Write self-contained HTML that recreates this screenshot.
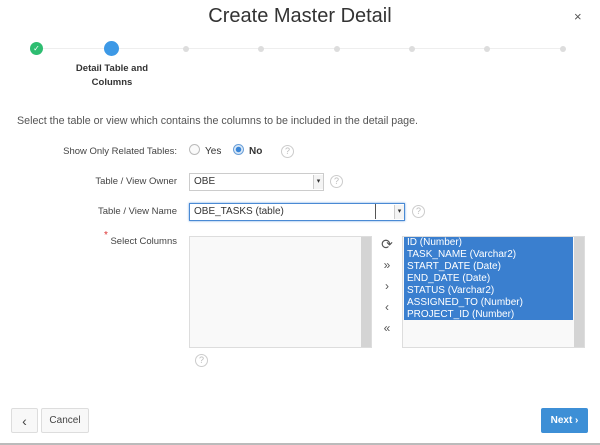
<!DOCTYPE html><html><head><style>
*{margin:0;padding:0;box-sizing:border-box}
body{width:600px;height:445px;background:#fff;font-family:"Liberation Sans",sans-serif;position:relative;overflow:hidden;color:#333}
.a{position:absolute}
.lbl{position:absolute;font-size:9.5px;color:#444;text-align:right;width:170px;left:7px}
.help{position:absolute;width:13px;height:13px;border:1px solid #ccc;border-radius:50%;font-size:9px;color:#bbb;text-align:center;line-height:11px}
.dot{position:absolute;width:6px;height:6px;border-radius:50%;background:#ddd;top:46px}
.btn{position:absolute;border:1px solid #ddd;background:#f8f8f8;border-radius:2px;font-size:10px;color:#444;text-align:center;line-height:24px}
.sel{position:absolute;border:1px solid #ccc;background:#fff;font-size:10px;line-height:16px;padding-left:4px}
.ar{position:absolute;font-size:12px;color:#555;left:381px;width:12px;text-align:center}
</style></head><body>
<div class="a" style="left:0;width:600px;top:5px;text-align:center;font-size:20px;color:#333">Create Master Detail</div>
<div class="a" style="left:574px;top:9px;font-size:13px;color:#555">×</div>
<div class="a" style="left:36px;top:48px;width:527px;height:1px;background:#eee"></div>
<div class="a" style="left:30px;top:42px;width:13px;height:13px;border-radius:50%;background:#2ebd71;color:#fff;font-size:8px;text-align:center;line-height:13px">✓</div>
<div class="a" style="left:104px;top:41px;width:15px;height:15px;border-radius:50%;background:#3d99e6"></div>
<div class="dot" style="left:183px"></div><div class="dot" style="left:258px"></div><div class="dot" style="left:334px"></div><div class="dot" style="left:409px"></div><div class="dot" style="left:484px"></div><div class="dot" style="left:560px"></div>
<div class="a" style="left:62px;width:100px;top:62px;text-align:center;font-size:9.5px;font-weight:bold;line-height:14px;color:#333">Detail Table and<br>Columns</div>
<div class="a" style="left:17px;top:115px;font-size:10.7px;color:#555">Select the table or view which contains the columns to be included in the detail page.</div>
<div class="lbl" style="top:146px">Show Only Related Tables:</div>
<div class="a" style="left:189px;top:144px;width:11px;height:11px;border:1px solid #bbb;border-radius:50%;background:#fafafa"></div>
<div class="a" style="left:205px;top:146px;font-size:10px">Yes</div>
<div class="a" style="left:233px;top:144px;width:11px;height:11px;border:1px solid #6a9fd8;border-radius:50%;background:radial-gradient(circle,#3a86d8 2.5px,#dbe9f7 3px)"></div>
<div class="a" style="left:249px;top:146px;font-size:10px;font-weight:bold">No</div>
<div class="help" style="left:281px;top:145px">?</div>
<div class="lbl" style="top:176px">Table / View Owner</div>
<div class="sel" style="left:189px;top:173px;width:135px;height:18px">OBE</div>
<div class="a" style="left:313px;top:175px;width:10px;height:14px;border-left:1px solid #ccc;font-size:7px;line-height:14px;text-align:center;background:#f4f4f4">▾</div>
<div class="help" style="left:330px;top:175px">?</div>
<div class="lbl" style="top:206px">Table / View Name</div>
<div class="sel" style="left:189px;top:203px;width:216px;height:18px;border-color:#4a8ad4;box-shadow:0 0 2px #6aa0e0">OBE_TASKS (table)</div>
<div class="a" style="left:375px;top:204px;width:1px;height:15px;background:#555"></div>
<div class="a" style="left:394px;top:205px;width:10px;height:14px;border-left:1px solid #ccc;font-size:7px;line-height:14px;text-align:center;background:#f4f4f4">▾</div>
<div class="help" style="left:412px;top:205px">?</div>
<div class="a" style="left:104px;top:230px;color:#d33;font-size:10px">*</div>
<div class="lbl" style="top:236px">Select Columns</div>
<div class="a" style="left:189px;top:236px;width:183px;height:112px;border:1px solid #ddd;background:#f9f9f9"></div>
<div class="a" style="left:361px;top:237px;width:10px;height:110px;background:#d4d4d4"></div>
<div class="ar" style="top:236px;font-size:14px">⟳</div>
<div class="ar" style="top:258px">»</div>
<div class="ar" style="top:279px">›</div>
<div class="ar" style="top:300px">‹</div>
<div class="ar" style="top:321px">«</div>
<div class="a" style="left:402px;top:236px;width:183px;height:112px;border:1px solid #ddd;background:#f9f9f9"></div>
<div class="a" style="left:574px;top:237px;width:10px;height:110px;background:#d4d4d4"></div>
<div class="a" style="left:404px;top:237px;width:169px;height:83px;background:#3a7fcf;color:#fff;font-size:10px;line-height:12px;padding:0 3px">ID (Number)<br>TASK_NAME (Varchar2)<br>START_DATE (Date)<br>END_DATE (Date)<br>STATUS (Varchar2)<br>ASSIGNED_TO (Number)<br>PROJECT_ID (Number)</div>
<div class="help" style="left:195px;top:354px">?</div>
<div class="btn" style="left:11px;top:408px;width:27px;height:25px;font-size:14px">‹</div>
<div class="btn" style="left:41px;top:408px;width:48px;height:25px">Cancel</div>
<div class="btn" style="left:541px;top:408px;width:47px;height:25px;background:#3d8fd6;border-color:#3d8fd6;color:#fff;font-weight:bold">Next ›</div>
<div class="a" style="left:0;top:443px;width:600px;height:2px;background:#bbb"></div>
</body></html>
